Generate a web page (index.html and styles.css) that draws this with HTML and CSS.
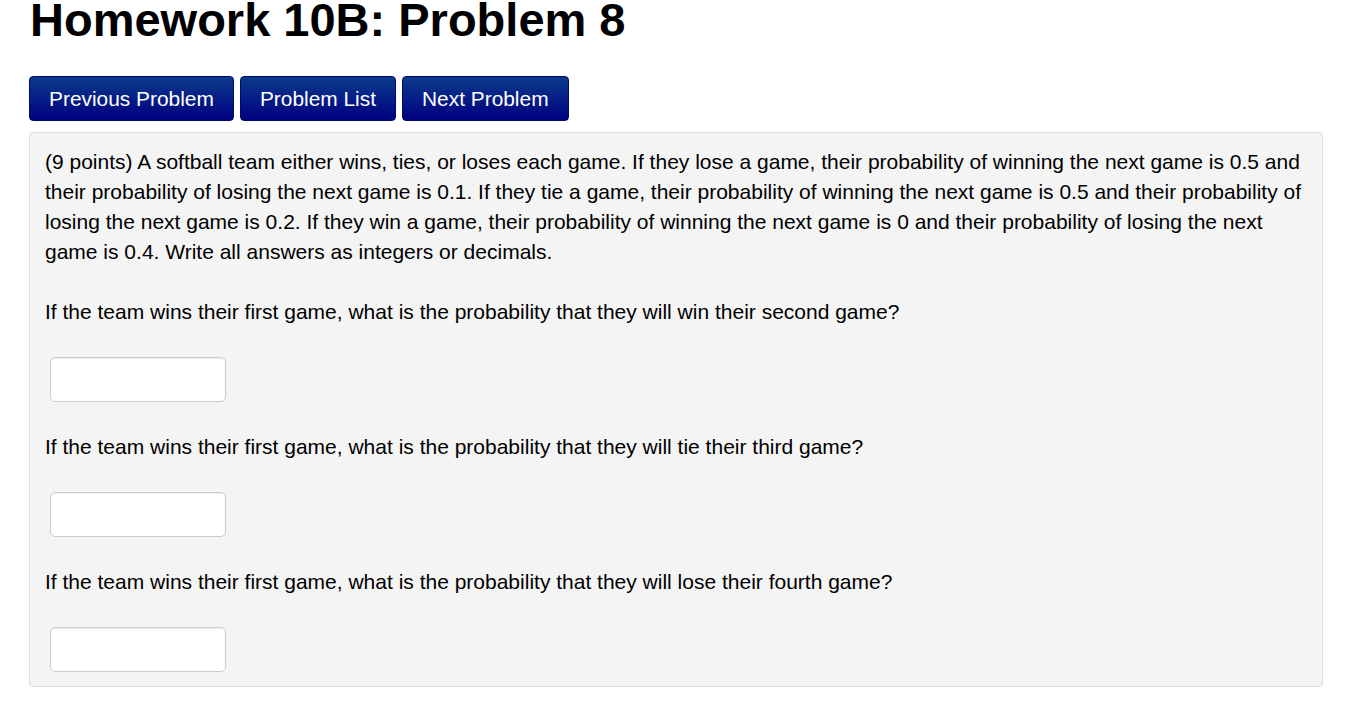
FILE: index.html
```html
<!DOCTYPE html>
<html lang="en">
<head>
<meta charset="utf-8">
<title>Homework 10B: Problem 8</title>
<link rel="stylesheet" href="styles.css">
</head>
<body>
<main class="page">
  <h1 class="page-title">Homework 10B: Problem 8</h1>
  <nav class="problem-nav">
    <a class="nav-btn" href="#">Previous Problem</a>
    <a class="nav-btn" href="#">Problem List</a>
    <a class="nav-btn" href="#">Next Problem</a>
  </nav>
  <section class="problem">
    <p class="problem-text">(9 points) A softball team either wins, ties, or loses each game. If they lose a game, their probability of winning the next game is 0.5 and their probability of losing the next game is 0.1. If they tie a game, their probability of winning the next game is 0.5 and their probability of losing the next game is 0.2. If they win a game, their probability of winning the next game is 0 and their probability of losing the next game is 0.4. Write all answers as integers or decimals.</p>
    <p class="problem-text">If the team wins their first game, what is the probability that they will win their second game?</p>
    <input class="answer" type="text" aria-label="Answer 1">
    <p class="problem-text">If the team wins their first game, what is the probability that they will tie their third game?</p>
    <input class="answer" type="text" aria-label="Answer 2">
    <p class="problem-text">If the team wins their first game, what is the probability that they will lose their fourth game?</p>
    <input class="answer" type="text" aria-label="Answer 3">
  </section>
</main>
</body>
</html>
```

FILE: styles.css
```css
html, body {
  margin: 0;
  padding: 0;
  background: #ffffff;
  color: #000000;
  font-family: "Liberation Sans", Arial, sans-serif;
}

.page {
  padding: 0 40px 0 29px;
}

.page-title {
  font-size: 47px;
  font-weight: bold;
  line-height: 40px;
  margin: 0 0 36px 1px;
  height: 40px;
}

.problem-nav {
  display: flex;
  gap: 6px;
  margin-bottom: 11px;
}

.nav-btn {
  display: inline-flex;
  align-items: center;
  height: 45px;
  box-sizing: border-box;
  padding: 0 19px;
  font-size: 20.9px;
  color: #ffffff;
  text-decoration: none;
  border: 1px solid #000a6a;
  border-radius: 4px;
  background: linear-gradient(to bottom, #0b3b8c 0%, #000080 100%);
}

.problem {
  box-sizing: border-box;
  width: 1294px;
  background: #f4f4f4;
  border: 1px solid #dedede;
  border-radius: 4px;
  padding: 14px 15px 14px 15px;
  display: flex;
  flex-direction: column;
  align-items: flex-start;
  gap: 30px;
}

.problem-text {
  margin: 0;
  font-size: 21px;
  line-height: 30px;
}

.answer {
  box-sizing: border-box;
  width: 176px;
  height: 45px;
  margin: 0 0 0 5px;
  background: #ffffff;
  border: 1px solid #cccccc;
  border-radius: 5px;
  box-shadow: inset 0 1px 1px rgba(0, 0, 0, 0.075);
  font-size: 19px;
  padding: 4px 8px;
}
```
